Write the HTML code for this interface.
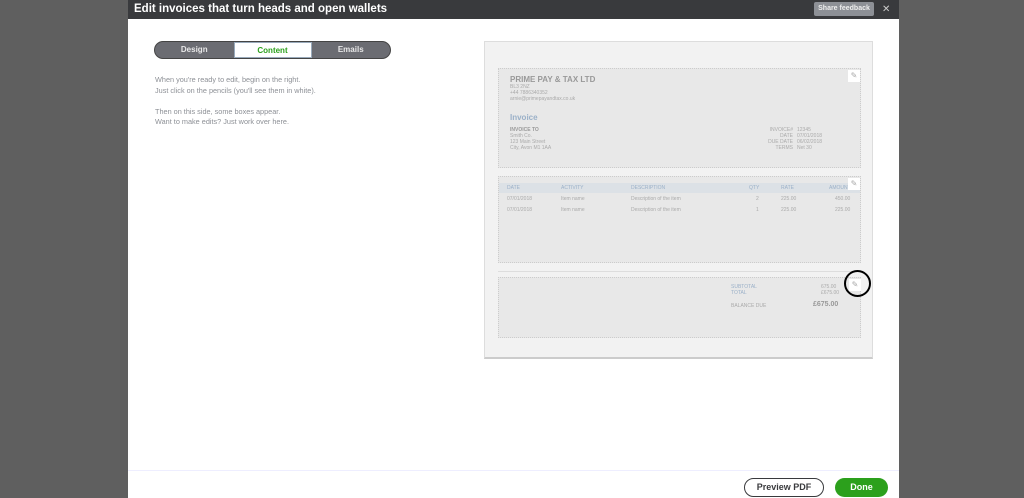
<!DOCTYPE html>
<html><head><meta charset="utf-8"><style>
*{margin:0;padding:0;box-sizing:border-box}
body{width:1024px;height:498px;background:#5f5f5f;font-family:"Liberation Sans",sans-serif;position:relative;overflow:hidden}
.modal{position:absolute;left:128px;top:0;width:771px;height:498px;background:#fff}
.hdr{position:absolute;left:0;top:0;width:771px;height:19px;background:#393a3d;color:#fff;font-size:11.5px;font-weight:bold;line-height:19px;padding-left:6px}
.share{position:absolute;left:686px;top:2px;width:60px;height:14px;background:#8d9096;color:#eee;font-size:7px;font-weight:bold;line-height:14px;text-align:center;border-radius:2px}
.x{position:absolute;left:754px;top:0;color:#ccc;font-size:10px;line-height:19px}
.tabs{position:absolute;left:26px;top:41px;width:237px;height:18px;border:1px solid #444;border-radius:9px;background:#6b6c72;overflow:hidden;display:flex;font-size:8px;font-weight:bold;color:#e8e8e8}
.tabs div{flex:1;text-align:center;line-height:16px}
.tabs .on{background:#fff;color:#2ca01c;border:1px solid #9ab;flex:0 0 78px}
.txt{position:absolute;left:27px;top:75px;font-size:7.3px;color:#8d9096;line-height:10.5px}
.prev{position:absolute;left:356px;top:41px;width:389px;height:318px;background:#f2f2f2;border:1px solid #ddd;border-bottom:2px solid #ccc}
.sec{position:absolute;background:#e8e8e8;border:1px dotted #ccc}
.pen{position:absolute;width:12px;height:12px;background:#fff;font-size:8px;color:#aaa;text-align:center;line-height:12px}
.g{color:#aaa;font-size:5px;line-height:6px;position:absolute}
.btn{position:absolute;top:478px;height:19px;border-radius:10px;font-size:9px;font-weight:bold;text-align:center;line-height:17px}
</style></head><body>
<div class="modal">
<div class="hdr">Edit invoices that turn heads and open wallets</div>
<div class="share">Share feedback</div><div class="x">✕</div>
<div class="tabs"><div>Design</div><div class="on">Content</div><div>Emails</div></div>
<div class="txt">When you're ready to edit, begin on the right.<br>Just click on the pencils (you'll see them in white).<br><br>Then on this side, some boxes appear.<br>Want to make edits? Just work over here.</div>
<div class="prev">
 <div class="sec" style="left:13px;top:26px;width:363px;height:100px">
  <div style="position:absolute;left:11px;top:6px;font-size:8px;font-weight:bold;color:#999">PRIME PAY &amp; TAX LTD</div>
  <div class="g" style="left:11px;top:15px">BL3 2NZ<br>+44 7886340352<br>arnie@primepayandtax.co.uk</div>
  <div style="position:absolute;left:11px;top:44px;font-size:8px;font-weight:bold;color:#9ab0c8">Invoice</div>
  <div class="g" style="left:11px;top:58px"><b style="color:#999">INVOICE TO</b><br>Smith Co.<br>123 Main Street<br>City, Avon M1 1AA</div>
  <div class="g" style="left:248px;top:58px;text-align:right;width:46px">INVOICE#<br>DATE<br>DUE DATE<br>TERMS</div>
  <div class="g" style="left:298px;top:58px">12345<br>07/01/2018<br>06/02/2018<br>Net 30</div>
  <div class="pen" style="left:349px;top:1px">✎</div>
 </div>
 <div class="sec" style="left:13px;top:134px;width:363px;height:87px">
  <div style="position:absolute;left:0;top:6px;width:361px;height:10px;background:#dce1e6"></div>
  <div class="g" style="top:8px;left:8px;color:#9ab0c8">DATE</div><div class="g" style="top:8px;left:62px;color:#9ab0c8">ACTIVITY</div><div class="g" style="top:8px;left:132px;color:#9ab0c8">DESCRIPTION</div><div class="g" style="top:8px;left:250px;color:#9ab0c8">QTY</div><div class="g" style="top:8px;left:282px;color:#9ab0c8">RATE</div><div class="g" style="top:8px;left:330px;color:#9ab0c8">AMOUNT</div>
  <div class="g" style="top:19px;left:8px">07/01/2018</div><div class="g" style="top:19px;left:62px">Item name</div><div class="g" style="top:19px;left:132px">Description of the item</div><div class="g" style="top:19px;left:257px">2</div><div class="g" style="top:19px;left:282px">225.00</div><div class="g" style="top:19px;left:336px">450.00</div>
  <div class="g" style="top:30px;left:8px">07/01/2018</div><div class="g" style="top:30px;left:62px">Item name</div><div class="g" style="top:30px;left:132px">Description of the item</div><div class="g" style="top:30px;left:257px">1</div><div class="g" style="top:30px;left:282px">225.00</div><div class="g" style="top:30px;left:336px">225.00</div>
  <div class="pen" style="left:349px;top:1px">✎</div>
 </div>
 <div style="position:absolute;left:13px;top:229px;width:363px;height:1px;background:#ddd"></div>
 <div class="sec" style="left:13px;top:235px;width:363px;height:61px">
  <div class="g" style="left:232px;top:6px;color:#9ab0c8">SUBTOTAL<br>TOTAL</div>
  <div class="g" style="left:322px;top:6px">675.00<br>£675.00</div>
  <div class="g" style="left:232px;top:25px">BALANCE DUE</div>
  <div style="position:absolute;left:314px;top:23px;font-size:7px;font-weight:bold;color:#999">£675.00</div>
  <div class="pen" style="left:350px;top:1px">✎</div>
  <div style="position:absolute;left:345px;top:-8px;width:27px;height:27px;border:2px solid #000;border-radius:50%"></div>
 </div>
</div>
<div style="position:absolute;left:0;top:470px;width:771px;height:1px;background:#eef"></div>
<div class="btn" style="left:616px;width:80px;border:1px solid #393a3d;color:#393a3d;background:#fff">Preview PDF</div>
<div class="btn" style="left:707px;width:53px;background:#2ca01c;color:#fff;line-height:19px">Done</div>
</div>
</body></html>
